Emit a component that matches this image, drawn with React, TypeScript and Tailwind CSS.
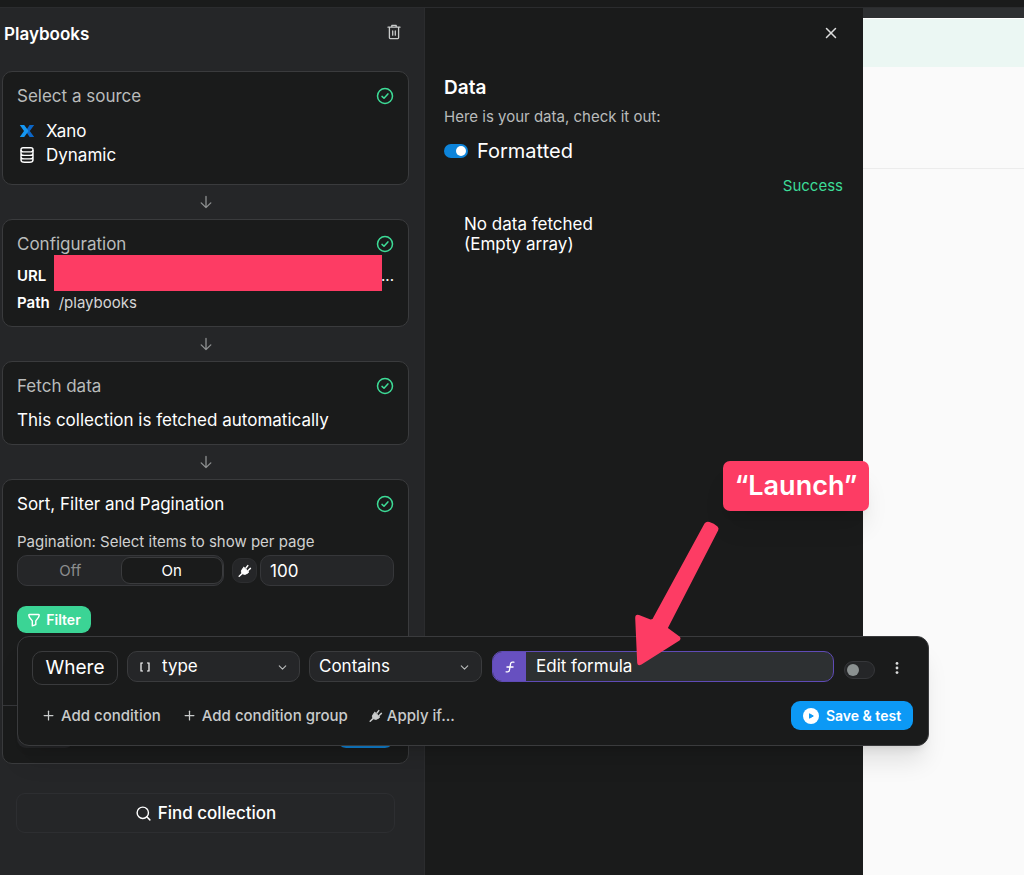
import React, { useState } from 'react';
import { ChevronDown, Plus, Search, X } from 'lucide-react';
import { PiFunctionBold } from 'react-icons/pi';

function CheckIcon() {
  return (
    <svg width="18" height="18" viewBox="0 0 18 18" fill="none" stroke="#3ddc97" strokeWidth="1.5" strokeLinecap="round" strokeLinejoin="round">
      <circle cx="9" cy="9" r="7.5" />
      <path d="M6 9.4 8 11.3 11.9 6.9" />
    </svg>
  );
}

function TrashIcon() {
  return (
    <svg width="14" height="16" viewBox="0 0 14 16" fill="none" stroke="currentColor" strokeWidth="1.3" strokeLinecap="round" strokeLinejoin="round">
      <path d="M1 3.2h12M4.8 3V1.4h4.4V3M2.4 3.4v10.4q0 .8.8.8h7.6q.8 0 .8-.8V3.4M5.7 7v4.2M8.3 7v4.2" />
    </svg>
  );
}

function XanoIcon() {
  return (
    <svg width="16" height="14" viewBox="0 0 16 14">
      <path d="M10.6 1H15.2L10.8 7 15.2 13H10.6L6.6 7Z" fill="#0b66c8" />
      <path d="M.8 1H5.2L9.6 7 5.2 13H.8L5 7Z" fill="#1597f2" />
    </svg>
  );
}

function DatabaseIcon() {
  return (
    <svg width="16" height="18" viewBox="0 0 16 18" fill="none" stroke="currentColor" strokeWidth="1.4">
      <rect x="2" y="1.700" width="12" height="4.200" rx="2.100" />
      <path d="M2 4v10c0 1.300 1.600 2.300 3.600 2.300h4.800c2 0 3.600-1 3.600-2.300V4M2 7.200c0 1.300 1.600 2.200 3.600 2.200h4.800c2 0 3.600-.9 3.600-2.200M2 10.700c0 1.300 1.600 2.200 3.600 2.200h4.800c2 0 3.600-.9 3.600-2.200" />
    </svg>
  );
}

function PlugIcon() {
  return (
    <svg width="14" height="14" viewBox="0 0 14 14" fill="none" stroke="currentColor" strokeWidth="1.5" strokeLinecap="round" strokeLinejoin="round">
      <path d="M1.200 12.200 4 9.600M8 4 9.800 1.600M10.400 6.200 12.400 4.400" />
      <path d="M6 3.400 10.800 8 9.600 9.200Q6.600 11.400 4.200 9.600 2.200 7.400 4.600 4.700Z" fill="currentColor" strokeWidth="1" />
    </svg>
  );
}

function BracketsIcon() {
  return (
    <svg width="10" height="10" viewBox="0 0 10 10" fill="none" stroke="currentColor" strokeWidth="1.2">
      <path d="M3 1H1v8h2M7 1h2v8H7" />
    </svg>
  );
}

function FunnelIcon() {
  return (
    <svg width="14" height="14" viewBox="0 0 14 14" fill="none" stroke="currentColor" strokeWidth="1.4" strokeLinejoin="round">
      <path d="M2.400 1.500h9.200q.7 0 .6.8L11.600 4.200 8.800 7.900v3.700L5.300 12.900V7.900L2.400 4.200 1.800 2.300Q1.700 1.500 2.400 1.500Z" />
    </svg>
  );
}

function PlayIcon() {
  return (
    <svg width="16" height="16" viewBox="0 0 16 16">
      <circle cx="8" cy="8" r="8" fill="#fff" />
      <path d="M6.5 5.800v4.400L10.300 8Z" fill="#0c99f5" stroke="#0c99f5" strokeLinejoin="round" />
    </svg>
  );
}

function StepArrow() {
  return (
    <div className="flex h-[34px] items-center justify-center text-[#8f9192]">
      <svg width="12" height="14" viewBox="0 0 12 14" fill="none" stroke="currentColor" strokeWidth="1.3" strokeLinecap="round" strokeLinejoin="round">
        <path d="M6 1.5v11M1.2 7.9 6 12.6l4.8-4.7" />
      </svg>
    </div>
  );
}

interface CardProps {
  title: string;
  active?: boolean;
  className?: string;
  children: React.ReactNode;
}

function Card({ title, active, className = '', children }: CardProps) {
  return (
    <section className={`rounded-[10px] border border-[#3a3b3d] bg-[#1a1b1b] px-[14px] pt-3 ${className}`}>
      <div className="flex h-6 items-center justify-between">
        <h2 className={active ? 'text-[17px] leading-6 text-white' : 'text-[17px] leading-6 text-[#b9bbbb]'}>{title}</h2>
        <CheckIcon />
      </div>
      {children}
    </section>
  );
}

function FilterPopover() {
  const [enabled, setEnabled] = useState(false);
  const field = 'h-[31px] w-full appearance-none rounded-[10px] border border-[#3a3b3d] bg-[#252628] text-[17px] text-white';

  return (
    <div className="absolute top-[30px] left-0 z-10 w-[912px] rounded-[12px] border border-[#3a3b3d] bg-[#1a1b1b] px-[14px] pt-[14px] pb-[15px] shadow-xl">
      <div className="flex items-start">
        <div className="flex h-[34px] w-[86px] items-center justify-center rounded-[10px] border border-[#3a3b3d] text-[19px] text-white">
          Where
        </div>
        <div className="relative ml-[9px] w-[173px]">
          <span className="pointer-events-none absolute top-[11px] left-[13px] text-white">
            <BracketsIcon />
          </span>
          <select aria-label="Field" className={`${field} pl-[34px]`}>
            <option>type</option>
          </select>
          <ChevronDown size={13} className="pointer-events-none absolute top-[10px] right-[11px] text-[#b9bbbb]" />
        </div>
        <div className="relative ml-[9px] w-[173px]">
          <select aria-label="Operator" className={`${field} pl-[9px]`}>
            <option>Contains</option>
          </select>
          <ChevronDown size={13} className="pointer-events-none absolute top-[10px] right-[11px] text-[#b9bbbb]" />
        </div>
        <div className="ml-[10px] flex h-[31px] w-[342px] overflow-hidden rounded-[10px] border border-[#5f4bb6] bg-[#2d3032]">
          <button aria-label="Formula" className="flex w-[33px] items-center justify-center bg-[#6750c0] text-white">
            <PiFunctionBold size={14} />
          </button>
          <input aria-label="Formula value" defaultValue="Edit formula" className="min-w-0 flex-1 bg-transparent pl-[10px] text-[17px] text-white outline-none" />
        </div>
        <input
          type="checkbox"
          aria-label="Enable condition"
          checked={enabled}
          onChange={(e) => setEnabled(e.target.checked)}
          className="mt-[10px] ml-[10px] flex h-[18px] w-[31px] appearance-none items-center rounded-full border border-[#36373a] bg-[#252628] px-[2px] before:size-3 before:rounded-full before:bg-[#8b9191] checked:justify-end"
        />
        <button aria-label="More" className="mt-[10px] ml-[18px] text-[#dcdddd]">
          <svg width="8" height="14" viewBox="0 0 8 14" fill="currentColor">
            <circle cx="4" cy="2.4" r="1.4" />
            <circle cx="4" cy="7" r="1.4" />
            <circle cx="4" cy="11.6" r="1.4" />
          </svg>
        </button>
      </div>
      <div className="mt-4 flex items-center text-[15px] leading-6 font-medium text-[#c9cbcb]">
        <button className="ml-[9px] flex items-center gap-[5px]">
          <Plus size={15} strokeWidth={2} />
          Add condition
        </button>
        <button className="ml-[21px] flex items-center gap-[5px]">
          <Plus size={15} strokeWidth={2} />
          Add condition group
        </button>
        <button className="ml-[21px] flex items-center gap-[4px]">
          <PlugIcon />
          Apply if...
        </button>
        <button className="mr-px ml-auto flex h-[29px] w-[122px] items-center justify-center gap-[7px] rounded-[9px] bg-[#0c99f5] text-[14px] font-semibold text-white">
          <PlayIcon />
          Save &amp; test
        </button>
      </div>
    </div>
  );
}

function Sidebar() {
  const [paginated, setPaginated] = useState(true);
  const on = 'h-[27px] flex-1 rounded-[9px] border border-[#3a3b3d] bg-[#1a1b1b] text-white';
  const off = 'h-[27px] flex-1 text-[#8b8d8e]';

  return (
    <aside className="w-[425px] shrink-0 border-r border-[#2b2c2e] bg-[#252628] pr-[15px] pl-[2px]">
      <header className="flex h-[63px] items-start justify-between pt-[14px] pr-[8px] pl-[2px]">
        <h1 className="text-[17px] leading-6 font-semibold text-white">Playbooks</h1>
        <button aria-label="Delete" className="mt-[2px] text-[#c9cbcb]">
          <TrashIcon />
        </button>
      </header>

      <Card title="Select a source" className="pb-[17px]">
        <ul className="mt-[11px] text-[17px] leading-6 text-white">
          <li className="flex items-center gap-[11px] pl-[2px]">
            <XanoIcon />
            Xano
          </li>
          <li className="flex items-center gap-[11px] pl-[2px]">
            <DatabaseIcon />
            Dynamic
          </li>
        </ul>
      </Card>
      <StepArrow />

      <Card title="Configuration" className="pb-[11px]">
        <div className="relative mt-2 flex h-6 items-center justify-between text-[15px] leading-6 text-white">
          <span className="font-semibold">URL</span>
          <span>...</span>
          <div className="absolute -top-[9px] right-[12px] left-[37px] h-[36px] bg-[#fd3c64]" />
        </div>
        <div className="mt-[3px] flex h-6 items-center gap-[9px] text-[15px] leading-6">
          <span className="font-semibold text-white">Path</span>
          <span className="text-[#d5d6d6]">/playbooks</span>
        </div>
      </Card>
      <StepArrow />

      <Card title="Fetch data" className="pb-3">
        <p className="mt-[10px] text-[17px] leading-6 text-white">This collection is fetched automatically</p>
      </Card>
      <StepArrow />

      <Card title="Sort, Filter and Pagination" active className="pb-[15px]">
        <label htmlFor="per-page" className="mt-[14px] block text-[15px] leading-6 text-[#d0d1d1]">
          Pagination: Select items to show per page
        </label>
        <div className="mt-px flex items-center">
          <div className="flex h-[31px] w-[207px] items-center rounded-[10px] border border-[#36373a] bg-[#252628] pl-[2px] text-[15px] leading-6">
            <button className={paginated ? off : on} onClick={() => setPaginated(false)}>Off</button>
            <button className={paginated ? on : off} onClick={() => setPaginated(true)}>On</button>
          </div>
          <button aria-label="Bind value" className="ml-2 flex size-[25px] items-center justify-center rounded-[9px] border border-[#2d2e30] bg-[#252628] text-white">
            <PlugIcon />
          </button>
          <input
            id="per-page"
            defaultValue="100"
            className="ml-[3px] h-[31px] min-w-0 flex-1 rounded-[10px] border border-[#36373a] bg-[#252628] px-[9px] text-[17px] text-white outline-none"
          />
        </div>
        <div className="relative mt-5">
          <button className="flex h-[27px] w-[74px] items-center justify-center gap-[5px] rounded-[9px] bg-[#3bd495] text-[14px] font-semibold text-white">
            <FunnelIcon />
            Filter
          </button>
          <FilterPopover />
        </div>
        <div className="-mx-[14px] mt-[72px] flex justify-between border-t border-[#36373a] px-[14px] pt-3">
          <button aria-label="Back" className="h-[30px] w-[57px] rounded-[9px] bg-[#252628]" />
          <button aria-label="Continue" className="h-[30px] w-[57px] rounded-[9px] bg-[#1180d0]" />
        </div>
      </Card>

      <div className="px-[14px] pt-[29px] pb-10">
        <button className="flex h-10 w-full items-center justify-center gap-[6px] rounded-[9px] border border-[#2d2e31] text-[17px] leading-6 font-medium text-white">
          <Search size={17} strokeWidth={2} />
          Find collection
        </button>
      </div>
    </aside>
  );
}

function DataPanel() {
  const [formatted, setFormatted] = useState(true);

  return (
    <section className="w-[438px] shrink-0 bg-[#1a1b1b] pr-5 pl-[19px] text-white">
      <div className="flex h-[68px] justify-end pt-4">
        <button aria-label="Close" className="mr-[3px] size-[18px] text-[#dcdddd]">
          <X size={18} strokeWidth={2} />
        </button>
      </div>
      <h2 className="text-[19px] leading-6 font-semibold">Data</h2>
      <p className="mt-[5px] text-[15px] leading-6 text-[#b9bbbb]">Here is your data, check it out:</p>
      <label className="mt-[10px] flex items-center gap-[9px] text-[20px] leading-6">
        <input
          type="checkbox"
          checked={formatted}
          onChange={(e) => setFormatted(e.target.checked)}
          className="flex h-[14px] w-6 appearance-none items-center rounded-full bg-[#3a3b3d] px-[2px] before:size-[10px] before:rounded-full before:bg-white checked:justify-end checked:bg-[#0d84da]"
        />
        Formatted
      </label>
      <p className="mt-[11px] text-right text-[15px] leading-6 text-[#3ddc97]">Success</p>
      <p className="mt-4 pl-5 text-[17px] leading-5">
        No data fetched
        <br />
        (Empty array)
      </p>
    </section>
  );
}

export default function App() {
  return (
    <div className="relative flex min-h-screen flex-col overflow-hidden bg-[#1a1b1b] font-['Inter',sans-serif]">
      <div className="h-2 shrink-0 border-b border-[#2b2c2e]" />
      <div className="flex flex-1">
        <Sidebar />
        <DataPanel />
        <main className="flex flex-1 flex-col bg-[#fafafa]">
          <div className="h-[10px] bg-[#2e3032]" />
          <div className="h-[49px] border-t border-white bg-[#ebf7f3]" />
          <div className="h-[102px] border-b border-[#ececec]" />
        </main>
      </div>

      {/* annotations */}
      <div className="absolute top-[461px] left-[723px] z-20 flex h-[50px] w-[146px] items-center justify-center rounded-[7px] bg-[#fd3c64] text-[27px] font-semibold text-white shadow-xl">
        “Launch”
      </div>
      <svg className="absolute top-[515px] left-[630px] z-20" width="100" height="160" viewBox="0 0 100 160">
        <path
          d="M74.500 8.500Q76.200 6 79.500 7Q84 8.200 87.500 11.500Q89.200 13.200 88.200 15.200L37.900 113 49.500 121.500Q51.500 123.500 49.500 125.500L11.500 149.500Q7.700 151.500 7.200 148L5.200 103Q5.200 99 9 100L20.500 104.500 22.500 104Z"
          fill="#fd3c64"
        />
      </svg>
    </div>
  );
}
